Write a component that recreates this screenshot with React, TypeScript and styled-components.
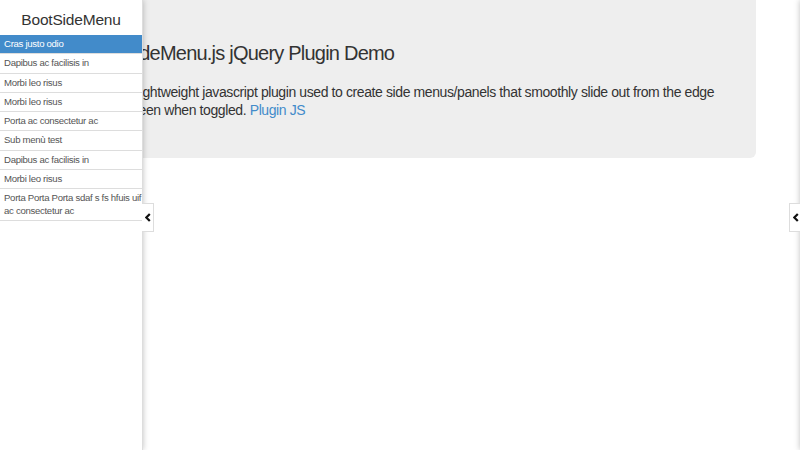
import React from 'react'
import styled, { createGlobalStyle } from 'styled-components'

const GlobalStyle = createGlobalStyle`
  html, body {
    margin: 0;
    padding: 0;
    overflow: hidden;
    background: #fff;
    font-family: "Liberation Sans", Arial, sans-serif;
    color: #333;
  }
`

const Page = styled.div`
  width: 800px;
  height: 450px;
  position: relative;
  overflow: hidden;
`

const Container = styled.div`
  padding-left: 40px;
  width: 716px;
`

const Jumbotron = styled.div`
  background: #eee;
  border-radius: 0 0 6px 6px;
  padding: 41px 40px 39px 45px;
`

const Heading = styled.h1`
  margin: 0 0 18px;
  font-size: 20px;
  letter-spacing: -0.78px;
  font-weight: 400;
  line-height: 24px;
  color: #333;
`

const Lead = styled.p`
  margin: 0;
  font-size: 14px;
  letter-spacing: -0.4px;
  line-height: 18px;
  color: #333;
`

const Link = styled.a`
  color: #428bca;
  text-decoration: none;
`

const SideMenu = styled.aside<{ $side: 'left' | 'right' }>`
  position: absolute;
  top: 0;
  bottom: 0;
  width: 143px;
  background: #fff;
  box-sizing: border-box;
  box-shadow: 0 0 6px rgba(0, 0, 0, 0.25);
  ${(p) => (p.$side === 'left' ? 'left: 0; border-right: 1px solid #ddd;' : 'left: 800px; border-left: 1px solid #ddd;')}
  z-index: 2;
`

const MenuTitle = styled.div`
  height: 35px;
  box-sizing: border-box;
  padding-top: 5px;
  display: flex;
  align-items: center;
  justify-content: center;
  font-size: 15.5px;
  letter-spacing: -0.2px;
  color: #333;
`

const MenuList = styled.div`
  display: flex;
  flex-direction: column;
`

const MenuItem = styled.a<{ $active?: boolean }>`
  display: block;
  padding: 3px 0 3px 4px;
  font-size: 9.6px;
  letter-spacing: -0.3px;
  line-height: 12.3px;
  border-bottom: 1px solid #ddd;
  background: ${(p) => (p.$active ? '#428bca' : '#fff')};
  color: ${(p) => (p.$active ? '#fff' : '#555')};
  text-decoration: none;
`

const Toggler = styled.div<{ $side: 'left' | 'right' }>`
  position: absolute;
  top: 203px;
  width: 12px;
  height: 29px;
  background: #fff;
  border: 1px solid #ddd;
  box-sizing: border-box;
  display: flex;
  align-items: center;
  justify-content: center;
  ${(p) => (p.$side === 'left' ? 'right: -12px; border-left: none;' : 'left: -12px; border-right: none;')}
`

const ChevronLeft = () => (
  <svg width="6" height="9" viewBox="0 0 6 9">
    <polyline points="4.8,1 1.3,4.5 4.8,8" fill="none" stroke="#111" strokeWidth="2.2" />
  </svg>
)

const items = [
  'Cras justo odio',
  'Dapibus ac facilisis in',
  'Morbi leo risus',
  'Morbi leo risus',
  'Porta ac consectetur ac',
  'Sub menù test',
  'Dapibus ac facilisis in',
  'Morbi leo risus',
  'Porta Porta Porta sdaf s fs hfuis uif ac consectetur ac',
]

const App = () => {
  return (
    <Page>
      <GlobalStyle />
      <Container>
        <Jumbotron>
          <Heading>BootSideMenu.js jQuery Plugin Demo</Heading>
          <Lead>
            This is a lightweight javascript plugin used to create side menus/panels that smoothly slide out from
            the edge of the screen when toggled. <Link href="#">Plugin JS</Link>
          </Lead>
        </Jumbotron>
      </Container>

      <SideMenu $side="left">
        <MenuTitle>BootSideMenu</MenuTitle>
        <MenuList>
          {items.map((item, i) => (
            <MenuItem key={i} href="#" $active={i === 0}>
              {item}
            </MenuItem>
          ))}
        </MenuList>
        <Toggler $side="left">
          <ChevronLeft />
        </Toggler>
      </SideMenu>

      <SideMenu $side="right">
        <Toggler $side="right">
          <ChevronLeft />
        </Toggler>
      </SideMenu>
    </Page>
  )
}

export default App
